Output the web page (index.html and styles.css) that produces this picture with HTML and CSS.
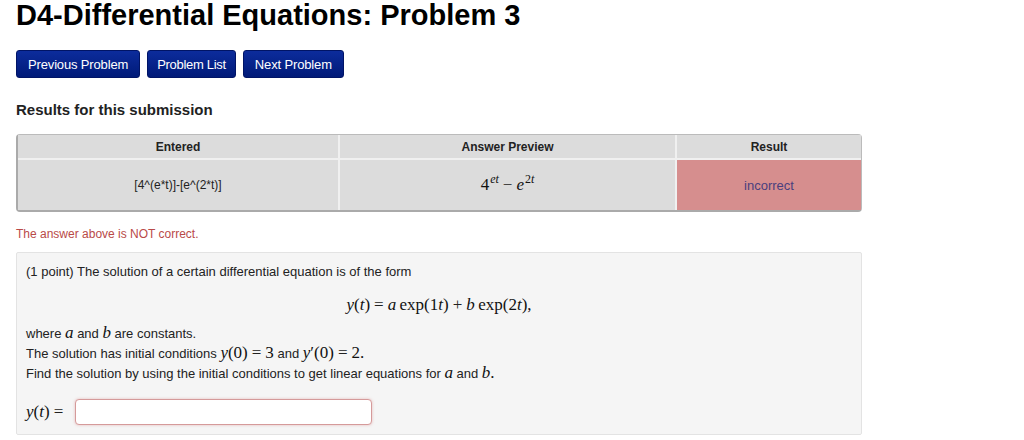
FILE: index.html
```html
<!DOCTYPE html>
<html lang="en">
<head>
    <title>D4-Differential Equations: Problem 3</title>
    <link rel="stylesheet" href="styles.css">
</head>
<body>
    <div class="page">
        <h1>D4-Differential Equations: Problem 3</h1>

        <div class="nav-buttons">
            <a href="#" class="nav-btn">Previous Problem</a>
            <a href="#" class="nav-btn narrow">Problem List</a>
            <a href="#" class="nav-btn">Next Problem</a>
        </div>

        <h3 class="results-title">Results for this submission</h3>

        <table class="results">
            <tr>
                <th class="col-entered">Entered</th>
                <th class="col-preview">Answer Preview</th>
                <th>Result</th>
            </tr>
            <tr>
                <td>[4^(e*t)]-[e^(2*t)]</td>
                <td><span class="math">4<sup><i>et</i></sup><span class="op">&minus;</span><i>e</i><sup>2<i>t</i></sup></span></td>
                <td class="incorrect">incorrect</td>
            </tr>
        </table>

        <p class="status">The answer above is NOT correct.</p>

        <div class="problem">
            <p>(1 point) The solution of a certain differential equation is of the form</p>
            <div class="display-eq math"><i>y</i>(<i>t</i>)<span class="op">=</span><i>a</i>&thinsp;exp(1<i>t</i>)<span class="op">+</span><i>b</i>&thinsp;exp(2<i>t</i>),</div>
            <p class="lines">
                where <span class="math"><i>a</i></span> and <span class="math"><i>b</i></span> are constants.<br>
                The solution has initial conditions <span class="math"><i>y</i>(0)<span class="op">=</span>3</span> and <span class="math"><i>y</i>&prime;(0)<span class="op">=</span>2.</span><br>
                Find the solution by using the initial conditions to get linear equations for <span class="math"><i>a</i></span> and <span class="math"><i>b</i>.</span>
            </p>
            <div class="answer-row">
                <span class="math"><i>y</i>(<i>t</i>)<span class="op">=</span></span>
                <input type="text" class="answer-input">
            </div>
        </div>
    </div>
</body>
</html>
```

FILE: styles.css
```css
body {
    font-family: "Liberation Sans", Arial, sans-serif;
    background-color: #fff;
    color: #333;
    margin: 0;
    padding: 0;
}

.page {
    padding: 0 16px;
    width: 846px;
}

h1 {
    font-size: 29px;
    font-weight: bold;
    color: #000;
    margin: 0;
    line-height: 31px;
}

.nav-buttons {
    display: flex;
    gap: 7px;
    margin-top: 19px;
}

.nav-btn {
    display: block;
    height: 28px;
    line-height: 27px;
    padding: 0 11px;
    font-size: 13px;
    letter-spacing: -0.15px;
    color: #fff;
    text-decoration: none;
    background: linear-gradient(#0c2c9c, #001a78);
    border: 1px solid #001466;
    border-radius: 3px;
    box-sizing: border-box;
}

.nav-btn.narrow {
    padding: 0 9px;
    letter-spacing: -0.3px;
}

.results-title {
    font-size: 15px;
    font-weight: bold;
    color: #222;
    margin: 23px 0 0 0;
    line-height: 18px;
}

.results {
    margin-top: 15px;
    width: 846px;
    table-layout: fixed;
    border-collapse: separate;
    border-spacing: 0;
    border: 1px solid #bbb;
    border-left: 2px solid #aaa;
    border-bottom: 2px solid #aaa;
    border-radius: 4px;
    background: #f4f4f4;
    font-size: 12px;
}

.results th,
.results td {
    background-color: #dcdcdc;
    text-align: center;
    border-right: 2px solid #f0f0f0;
    color: #222;
    padding: 0;
}

.results th:last-child,
.results td:last-child {
    border-right: none;
}

.results th {
    height: 23px;
    font-size: 12px;
    border-bottom: 2px solid #f0f0f0;
}

.results td {
    height: 50px;
}

.col-entered { width: 320px; }
.col-preview { width: 335px; }

.results td.incorrect {
    background-color: #d68e8e;
    color: #4a3f7e;
    font-size: 13px;
}

.math {
    font-family: "Liberation Serif", "DejaVu Serif", serif;
    font-size: 17px;
    color: #111;
}

.math i {
    font-style: italic;
}

.math sup {
    font-size: 12px;
    vertical-align: 7px;
    line-height: 0;
    padding-left: 1px;
}

.math .op {
    color: #222;
    padding: 0 4px;
}

.status {
    color: #b94a48;
    font-size: 12px;
    margin: 15px 0 0 0;
    line-height: 14px;
}

.problem {
    margin-top: 11px;
    background-color: #f5f5f5;
    border: 1px solid #e3e3e3;
    border-radius: 2px;
    padding: 9px 9px 10px 9px;
    font-size: 13px;
    color: #222;
    height: 162px;
}

.problem p {
    margin: 0;
    line-height: 19px;
}

.display-eq {
    text-align: center;
    margin: 14px 0 8px 0;
    line-height: 20px;
}

.answer-row {
    display: flex;
    align-items: center;
    gap: 8px;
    margin-top: 16px;
}

.answer-input {
    width: 297px;
    height: 26px;
    box-sizing: border-box;
    border: 1px solid #d59a9a;
    border-radius: 4px;
    box-shadow: 0 0 3px rgba(200, 80, 80, 0.35);
    background: #fff;
    padding: 0 6px;
}
```
